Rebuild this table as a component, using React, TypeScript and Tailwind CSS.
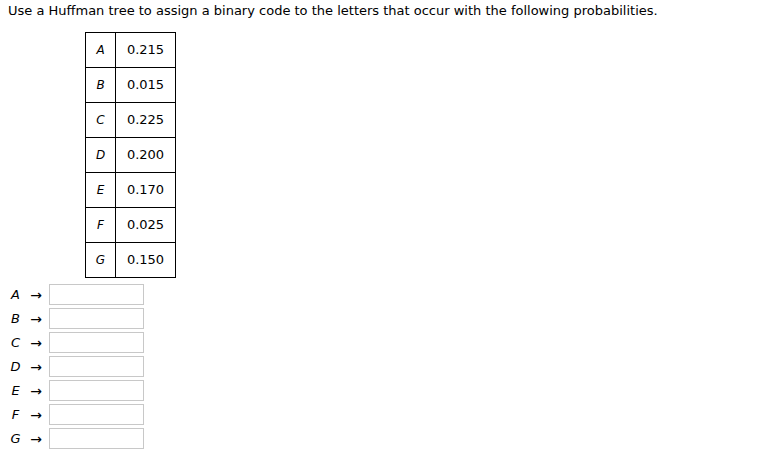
const rows: [string, string][] = [
  ["A", "0.215"],
  ["B", "0.015"],
  ["C", "0.225"],
  ["D", "0.200"],
  ["E", "0.170"],
  ["F", "0.025"],
  ["G", "0.150"],
];

export default function App() {
  return (
    <div
      className="bg-white text-black text-[13px] leading-[16px] w-[757px] h-[476px] pl-2 pt-[3px]"
      style={{ fontFamily: "Verdana, 'DejaVu Sans', sans-serif" }}
    >
      <p>
        Use a Huffman tree to assign a binary code to the letters that occur
        with the following probabilities.
      </p>

      {/* probability table */}
      <table className="ml-[77px] mt-[13px] border-collapse">
        <tbody>
          {rows.map(([letter, p]) => (
            <tr key={letter} className="h-[35px]">
              <td className="border border-black w-[30px] text-center italic text-[12px]">
                {letter}
              </td>
              <td className="border border-black w-[60px] text-center">{p}</td>
            </tr>
          ))}
        </tbody>
      </table>

      {/* answer inputs */}
      <div className="mt-[6px] flex flex-col gap-[3px]">
        {rows.map(([letter]) => (
          <div key={letter} className="flex items-center h-[21px]">
            <span className="w-[19px] text-center italic text-[13px] -ml-[2px]">
              {letter}
            </span>
            <span className="w-[22px] text-center text-[14px]">→</span>
            <input
              type="text"
              className="ml-[2px] w-[95px] h-[21px] border border-[#c8c8c8] bg-white"
            />
          </div>
        ))}
      </div>
    </div>
  );
}
